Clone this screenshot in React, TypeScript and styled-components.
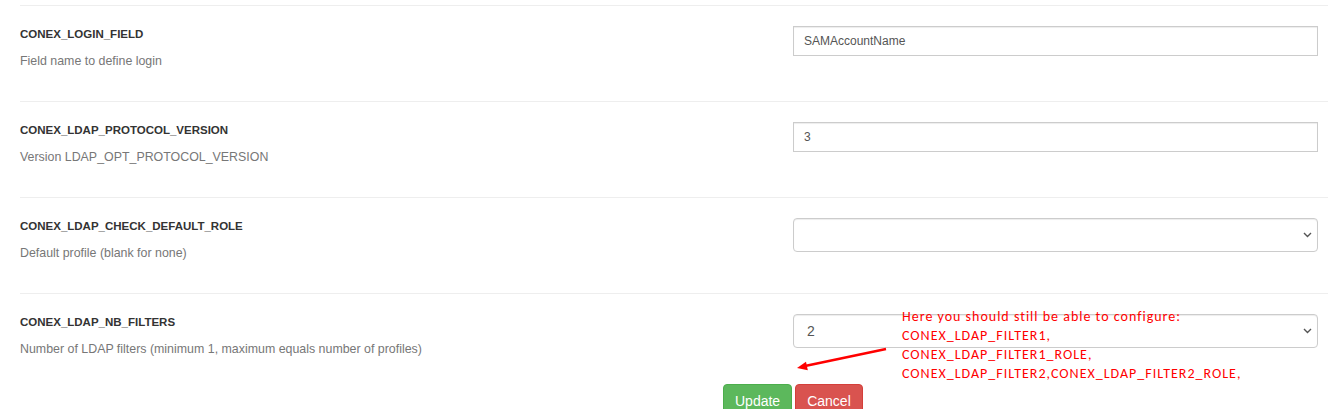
import React from "react";
import styled, { createGlobalStyle } from "styled-components";

const GlobalStyle = createGlobalStyle`
  html, body {
    margin: 0;
    padding: 0;
    background: #fff;
    overflow: hidden;
  }
  body {
    font-family: "Liberation Sans", Arial, sans-serif;
    font-size: 12px;
    color: #333;
  }
`;

const Page = styled.div`
  position: relative;
  width: 1328px;
  height: 409px;
  padding-top: 5px;
  box-sizing: border-box;
`;

const Row = styled.div<{ $last?: boolean }>`
  display: grid;
  grid-template-columns: 1fr 525px;
  margin-left: 20px;
  padding: 20px 10px 0 0;
  height: ${(p) => (p.$last ? 91 : 96)}px;
  box-sizing: border-box;
  border-top: 1px solid #eee;
`;

const Label = styled.div`
  display: flex;
  flex-direction: column;
`;

const Title = styled.div`
  font-weight: bold;
  font-size: 11.5px;
  line-height: 17px;
  color: #333;
`;

const Description = styled.div`
  margin-top: 10px;
  font-size: 12.4px;
  line-height: 17px;
  color: #777;
`;

const TextInput = styled.input`
  width: 100%;
  height: 30px;
  box-sizing: border-box;
  border: 1px solid #ccc;
  border-radius: 0;
  padding: 0 10px;
  font-family: "Liberation Sans", Arial, sans-serif;
  font-size: 12px;
  color: #555;
  box-shadow: inset 0 1px 1px rgba(0, 0, 0, 0.075);
  outline: none;
`;

const SelectWrap = styled.div`
  position: relative;
  height: 34px;
`;

const Select = styled.select`
  width: 100%;
  height: 34px;
  box-sizing: border-box;
  border: 1px solid #ccc;
  border-radius: 4px;
  padding: 0 30px 0 13px;
  background: #fff;
  appearance: none;
  font-family: "Liberation Sans", Arial, sans-serif;
  font-size: 14px;
  color: #555;
  box-shadow: inset 0 1px 1px rgba(0, 0, 0, 0.075);
  outline: none;
`;

const Chevron = styled.svg`
  position: absolute;
  right: 6px;
  top: 14px;
  width: 9px;
  height: 6px;
  pointer-events: none;
`;

const ButtonBar = styled.div`
  display: flex;
  gap: 3px;
  margin-left: 723px;
`;

const Button = styled.button<{ $variant: "success" | "danger" }>`
  height: 34px;
  padding: 6px 11px;
  border-radius: 4px;
  border: 1px solid
    ${(p) => (p.$variant === "success" ? "#4cae4c" : "#d43f3a")};
  background: ${(p) => (p.$variant === "success" ? "#5cb85c" : "#d9534f")};
  color: #fff;
  font-family: "Liberation Sans", Arial, sans-serif;
  font-size: 14px;
  line-height: 20px;
`;

const Annotation = styled.div`
  position: absolute;
  left: 902px;
  top: 307px;
  font-family: Carlito, "DejaVu Sans Condensed", "Open Sans", sans-serif;
  font-size: 14px;
  letter-spacing: 1px;
  line-height: 19px;
  color: #ff0000;
  white-space: nowrap;
`;

const Arrow = styled.svg`
  position: absolute;
  left: 790px;
  top: 340px;
  width: 100px;
  height: 36px;
  pointer-events: none;
`;

type Field = {
  name: string;
  description: string;
  kind: "text" | "select";
  value: string;
};

const fields: Field[] = [
  {
    name: "CONEX_LOGIN_FIELD",
    description: "Field name to define login",
    kind: "text",
    value: "SAMAccountName",
  },
  {
    name: "CONEX_LDAP_PROTOCOL_VERSION",
    description: "Version LDAP_OPT_PROTOCOL_VERSION",
    kind: "text",
    value: "3",
  },
  {
    name: "CONEX_LDAP_CHECK_DEFAULT_ROLE",
    description: "Default profile (blank for none)",
    kind: "select",
    value: "",
  },
  {
    name: "CONEX_LDAP_NB_FILTERS",
    description:
      "Number of LDAP filters (minimum 1, maximum equals number of profiles)",
    kind: "select",
    value: "2",
  },
];

const App = () => {
  return (
    <Page>
      <GlobalStyle />
      {fields.map((f, i) => (
        <Row key={f.name} $last={i === fields.length - 1}>
          <Label>
            <Title>{f.name}</Title>
            <Description>{f.description}</Description>
          </Label>
          {f.kind === "text" ? (
            <TextInput defaultValue={f.value} />
          ) : (
            <SelectWrap>
              <Select defaultValue={f.value}>
                <option value="">{""}</option>
                <option value="1">1</option>
                <option value="2">2</option>
              </Select>
              <Chevron viewBox="0 0 9 6">
                <path
                  d="M1 1 L4.5 4.5 L8 1"
                  fill="none"
                  stroke="#555"
                  strokeWidth="1.4"
                />
              </Chevron>
            </SelectWrap>
          )}
        </Row>
      ))}
      <ButtonBar>
        <Button $variant="success">Update</Button>
        <Button $variant="danger">Cancel</Button>
      </ButtonBar>
      <Annotation>
        Here you should still be able to configure:
        <br />
        CONEX_LDAP_FILTER1,
        <br />
        CONEX_LDAP_FILTER1_ROLE,
        <br />
        CONEX_LDAP_FILTER2,CONEX_LDAP_FILTER2_ROLE,
      </Annotation>
      <Arrow viewBox="790 340 100 36">
        <line
          x1="886"
          y1="349"
          x2="805"
          y2="366"
          stroke="#ff0000"
          strokeWidth="2.6"
        />
        <polygon points="797,368 807.8,370.2 806,361.8" fill="#ff0000" />
      </Arrow>
    </Page>
  );
};

export default App;
